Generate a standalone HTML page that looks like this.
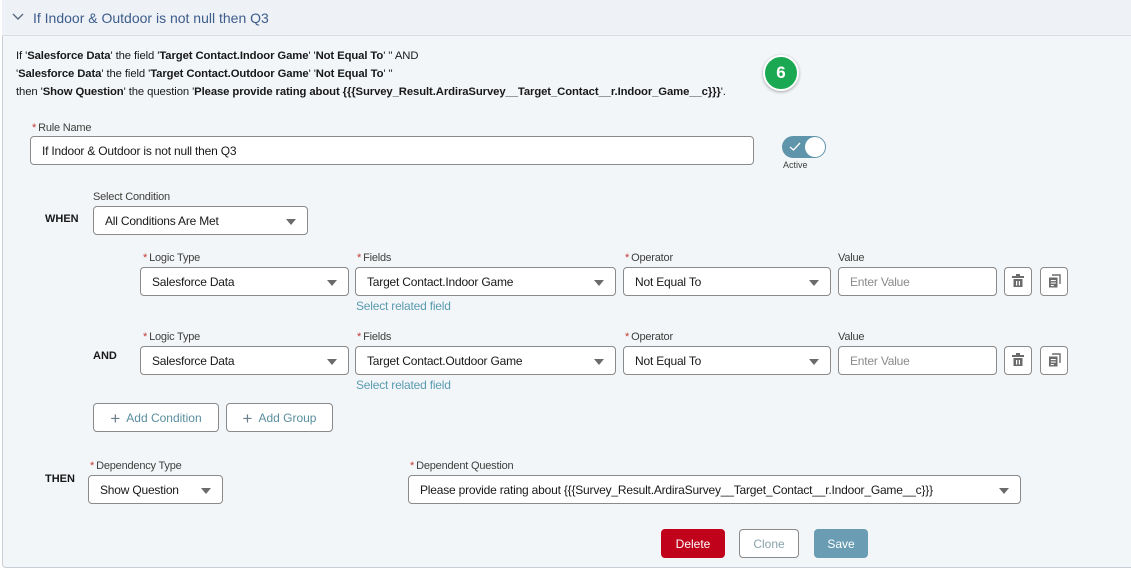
<!DOCTYPE html>
<html><head><meta charset="utf-8"><style>
*{box-sizing:border-box;margin:0;padding:0}
body{width:1131px;height:572px;background:#fff;font-family:"Liberation Sans",sans-serif;font-size:12px;color:#181818;position:relative;overflow:hidden}
.a{position:absolute;white-space:nowrap}
.panel{position:absolute;left:2px;top:0;width:1129px;height:568px;background:#f3f6f9;border:1px solid #c9cfd6;border-top:none;border-right:none;border-radius:0 0 0 4px}
.hdr{position:absolute;left:2px;top:0;width:1129px;height:36px;background:#eef1f5;border-bottom:1px solid #d9dee4}
.lbl{position:absolute;font-size:11px;color:#3e3e3c;white-space:nowrap;letter-spacing:-0.2px}
.lbl b{color:#c23934;font-weight:normal;margin-right:2px}
.in{position:absolute;height:29px;background:#fff;border:1px solid #8a8a8a;border-radius:4px;padding-left:11px;line-height:28px;font-size:12px;white-space:nowrap;overflow:hidden;letter-spacing:-0.2px}
.sel::after{content:"";position:absolute;right:11px;top:12px;border-left:5px solid transparent;border-right:5px solid transparent;border-top:6px solid #6b6b6b}
.ph{color:#8a8a8a}
.ib{position:absolute;width:28px;height:29px;background:#fff;border:1px solid #8a8a8a;border-radius:4px}
.rel{position:absolute;color:#5a9bb0;font-size:12px;letter-spacing:-0.2px}
.btn{position:absolute;height:29px;border:1px solid #8a8a8a;border-radius:4px;background:#fff;color:#5a8e9e;text-align:center;line-height:28px;font-size:12px}
.kw{position:absolute;font-weight:bold;font-size:11px}
.sum{position:absolute;left:16px;white-space:nowrap;font-size:11.3px;letter-spacing:-0.1px}
</style></head><body>
<div class="panel"></div>
<div class="hdr"></div>
<svg class="a" style="left:12px;top:12px" width="12" height="10"><path d="M1 2 L6 7 L11 2" stroke="#5a6b80" stroke-width="1.4" fill="none"/></svg>
<div class="a" style="left:33px;top:10px;font-size:14px;color:#3d5d8c">If Indoor &amp; Outdoor is not null then Q3</div>

<div class="sum" style="top:50px">If '<b>Salesforce Data</b>' the field '<b>Target Contact.Indoor Game</b>' '<b>Not Equal To</b>' '' AND</div>
<div class="sum" style="top:68px">'<b>Salesforce Data</b>' the field '<b>Target Contact.Outdoor Game</b>' '<b>Not Equal To</b>' ''</div>
<div class="sum" style="top:86px">then '<b>Show Question</b>' the question '<b>Please provide rating about {{{Survey_Result.ArdiraSurvey__Target_Contact__r.Indoor_Game__c}}}</b>'.</div>

<div class="a" style="left:763px;top:55px;width:36px;height:36px;border-radius:50%;background:#1aa952;border:2px solid #fff;box-shadow:0 1px 3px rgba(0,0,0,.35);color:#fff;font-weight:bold;font-size:17px;text-align:center;line-height:32px">6</div>

<div class="lbl" style="left:32px;top:122px"><b>*</b>Rule Name</div>
<div class="in" style="left:30px;top:136px;width:724px;height:29px">If Indoor &amp; Outdoor is not null then Q3</div>
<div class="a" style="left:782px;top:136px;width:44px;height:22px;border-radius:11px;background:#5f95ab"></div>
<div class="a" style="left:805px;top:137px;width:20px;height:20px;border-radius:50%;background:#fff"></div>
<svg class="a" style="left:789px;top:142px" width="12" height="10"><path d="M1 5 L4.5 8 L11 1" stroke="#fff" stroke-width="1.3" fill="none"/></svg>
<div class="a" style="left:783px;top:160px;font-size:9px;color:#3e3e3c">Active</div>

<div class="lbl" style="left:93px;top:191px">Select Condition</div>
<div class="kw" style="left:45px;top:213px">WHEN</div>
<div class="in sel" style="left:93px;top:206px;width:215px">All Conditions Are Met</div>

<div class="lbl" style="left:143px;top:252px"><b>*</b>Logic Type</div>
<div class="lbl" style="left:357px;top:252px"><b>*</b>Fields</div>
<div class="lbl" style="left:625px;top:252px"><b>*</b>Operator</div>
<div class="lbl" style="left:838px;top:252px">Value</div>
<div class="in sel" style="left:140px;top:267px;width:209px">Salesforce Data</div>
<div class="in sel" style="left:355px;top:267px;width:261px">Target Contact.Indoor Game</div>
<div class="in sel" style="left:623px;top:267px;width:208px">Not Equal To</div>
<div class="in ph" style="left:838px;top:267px;width:159px">Enter Value</div>
<div class="ib" style="left:1004px;top:267px"></div>
<div class="ib" style="left:1040px;top:267px"></div>
<div class="rel" style="left:356px;top:299px">Select related field</div>

<div class="kw" style="left:93px;top:350px">AND</div>
<div class="lbl" style="left:143px;top:331px"><b>*</b>Logic Type</div>
<div class="lbl" style="left:357px;top:331px"><b>*</b>Fields</div>
<div class="lbl" style="left:625px;top:331px"><b>*</b>Operator</div>
<div class="lbl" style="left:838px;top:331px">Value</div>
<div class="in sel" style="left:140px;top:346px;width:209px">Salesforce Data</div>
<div class="in sel" style="left:355px;top:346px;width:261px">Target Contact.Outdoor Game</div>
<div class="in sel" style="left:623px;top:346px;width:208px">Not Equal To</div>
<div class="in ph" style="left:838px;top:346px;width:159px">Enter Value</div>
<div class="ib" style="left:1004px;top:346px"></div>
<div class="ib" style="left:1040px;top:346px"></div>
<div class="rel" style="left:356px;top:378px">Select related field</div>

<svg class="a" style="left:1012px;top:274px" width="12" height="14"><g fill="#6b6b6b"><rect x="4" y="0" width="4" height="2"/><rect x="0" y="2" width="12" height="2"/><path d="M1.5 5 H10.5 V13 H1.5Z"/></g><rect x="4" y="7" width="1.2" height="4.5" fill="#fff"/><rect x="6.8" y="7" width="1.2" height="4.5" fill="#fff"/></svg>
<svg class="a" style="left:1012px;top:353px" width="12" height="14"><g fill="#6b6b6b"><rect x="4" y="0" width="4" height="2"/><rect x="0" y="2" width="12" height="2"/><path d="M1.5 5 H10.5 V13 H1.5Z"/></g><rect x="4" y="7" width="1.2" height="4.5" fill="#fff"/><rect x="6.8" y="7" width="1.2" height="4.5" fill="#fff"/></svg>
<svg class="a" style="left:1048px;top:274px" width="13" height="14"><path d="M4 1 H12 V10" stroke="#6b6b6b" stroke-width="1.4" fill="none"/><rect x="1" y="3.5" width="8.5" height="10" fill="#6b6b6b"/><rect x="2.8" y="6" width="5" height="1.1" fill="#fff"/><rect x="2.8" y="8.5" width="5" height="1.1" fill="#fff"/><rect x="2.8" y="11" width="3" height="1.1" fill="#fff"/></svg>
<svg class="a" style="left:1048px;top:353px" width="13" height="14"><path d="M4 1 H12 V10" stroke="#6b6b6b" stroke-width="1.4" fill="none"/><rect x="1" y="3.5" width="8.5" height="10" fill="#6b6b6b"/><rect x="2.8" y="6" width="5" height="1.1" fill="#fff"/><rect x="2.8" y="8.5" width="5" height="1.1" fill="#fff"/><rect x="2.8" y="11" width="3" height="1.1" fill="#fff"/></svg>

<div class="btn" style="left:93px;top:403px;width:126px"><span style="font-size:17px;vertical-align:-2px;color:#6b7f8a">+</span>&nbsp; Add Condition</div>
<div class="btn" style="left:226px;top:403px;width:107px"><span style="font-size:17px;vertical-align:-2px;color:#6b7f8a">+</span>&nbsp; Add Group</div>

<div class="kw" style="left:45px;top:473px">THEN</div>
<div class="lbl" style="left:90px;top:460px"><b>*</b>Dependency Type</div>
<div class="in sel" style="left:88px;top:475px;width:135px">Show Question</div>
<div class="lbl" style="left:410px;top:460px"><b>*</b>Dependent Question</div>
<div class="in sel" style="left:408px;top:475px;width:613px">Please provide rating about {{{Survey_Result.ArdiraSurvey__Target_Contact__r.Indoor_Game__c}}}</div>

<div class="btn" style="left:661px;top:529px;width:64px;background:#c0031b;border-color:#c0031b;color:#fff">Delete</div>
<div class="btn" style="left:739px;top:529px;width:60px;color:#8aa3ad">Clone</div>
<div class="btn" style="left:814px;top:529px;width:54px;background:#6a9db3;border-color:#6a9db3;color:#fff">Save</div>
</body></html>
